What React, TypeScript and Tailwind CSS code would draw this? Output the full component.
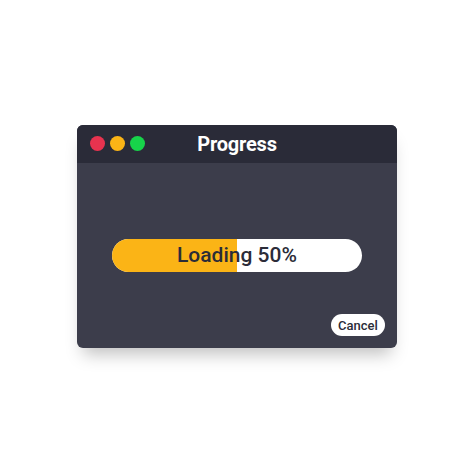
import React from "react";

export default function App() {
  return (
    <div className="w-[474px] h-[474px] bg-white pt-[125px] pl-[77px]" style={{ fontFamily: "Roboto, 'Noto Sans', sans-serif" }}>
      <div className="w-[320px] h-[223px] rounded-[6px] overflow-hidden bg-[#3c3d4b] shadow-[0_12px_16px_-6px_rgba(0,0,0,0.25)] flex flex-col">
        <div className="relative h-[38px] bg-[#2a2b38] flex items-center justify-center">
          <div className="absolute left-[13px] top-[11px] flex gap-[5px]">
            <div className="w-[15px] h-[15px] rounded-full bg-[#e8334f]" />
            <div className="w-[15px] h-[15px] rounded-full bg-[#fbb416]" />
            <div className="w-[15px] h-[15px] rounded-full bg-[#17d34a]" />
          </div>
          <span className="text-white text-[20px] font-bold tracking-[-0.2px] leading-none">Progress</span>
        </div>
        <div className="flex-1 flex flex-col px-[35px] pt-[76px] pb-[12px]">
          <div className="relative w-[250px] h-[33px] rounded-full bg-white overflow-hidden flex items-center justify-center">
            <div className="absolute left-0 top-0 h-full w-[125px] bg-[#fbb416]" />
            <span className="relative text-[#2b2c38] text-[21px] font-medium leading-none">Loading 50%</span>
          </div>
          <div className="flex-1" />
          <div className="flex justify-end -mr-[23px]">
            <div className="w-[54px] h-[22px] rounded-full bg-white flex items-center justify-center text-[#2b2c38] text-[13px] font-medium leading-none">Cancel</div>
          </div>
        </div>
      </div>
    </div>
  );
}
